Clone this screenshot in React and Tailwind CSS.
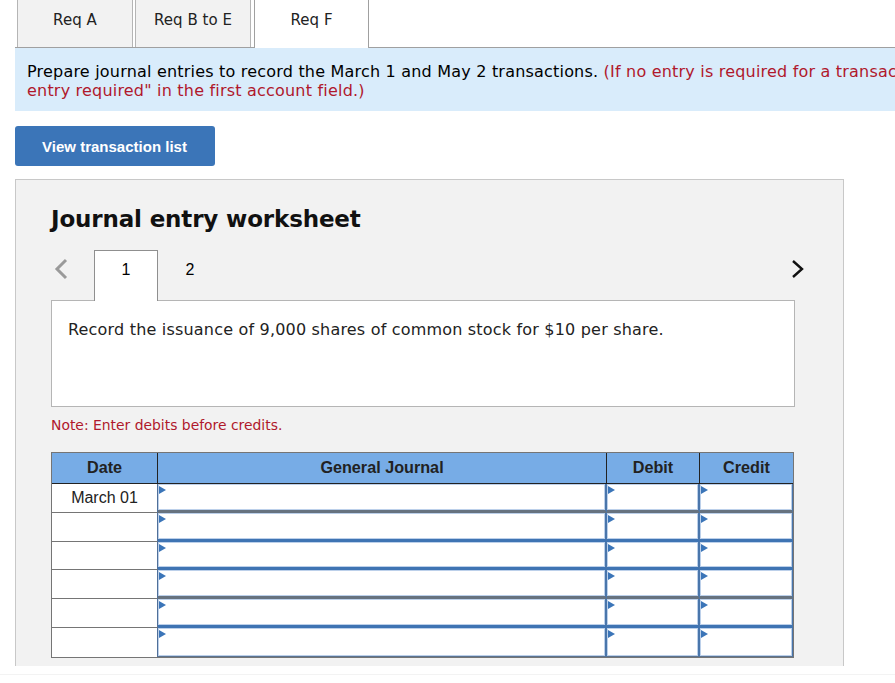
import React from "react";

const rows = [
  { date: "March 01", line: "border-b-[#66727f]" },
  { date: "", line: "border-b-[#3f74b3]" },
  { date: "", line: "border-b-[#3f74b3]" },
  { date: "", line: "border-b-[#66727f]" },
  { date: "", line: "border-b-[#3f74b3]" },
  { date: "", line: "border-b-[#5b7391]" },
];

function InputCell({ line, last, bottom }) {
  return (
    <div className={`relative h-full border-[#4a76ab] ${bottom ? "border-b" : "border-b-[3px]"} ${last ? "border-r" : "border-r-2"} ${line}`}>
      <div className="h-full bg-white border border-[#bcd0ea]" />
      <span className="absolute left-[1px] top-[2px] w-0 h-0 border-y-4 border-y-transparent border-l-[7px] border-l-[#3b75b8]" />
    </div>
  );
}

export default function App() {
  return (
    <div className="relative w-[895px] h-[683px] overflow-hidden bg-white font-['DejaVu_Sans',sans-serif] text-black">
      {/* Tabs */}
      <div className="flex h-[48px] ml-[15px] pl-[2px] border-b border-[#a0a0a0] text-[15px] tracking-[0.05px] text-[#222]">
        <div className="w-[116px] h-[47px] flex items-center justify-center bg-[#f2f2f2] border-x border-[#b5b5b5] pb-[6px]">Req A</div>
        <div className="w-[116px] h-[47px] ml-[2px] flex items-center justify-center bg-[#f2f2f2] border-x border-[#b5b5b5] pb-[6px]">Req B to E</div>
        <div className="w-[115px] h-[48px] ml-[3px] flex items-center justify-center bg-white border-x border-[#a0a0a0] pb-[7px]">Req F</div>
      </div>

      {/* Instructions */}
      <div className="ml-[15px] h-[63px] bg-[#d9ecfb] pl-[12px] pt-[14px] leading-[19px] whitespace-nowrap text-[16px] tracking-[0.2px]">
        <div>
          Prepare journal entries to record the March 1 and May 2 transactions.{" "}
          <span className="text-[#b0182c]">(If no entry is required for a transaction/event, select "No</span>
        </div>
        <div className="text-[#b0182c]">entry required" in the first account field.)</div>
      </div>

      <button className="ml-[15px] mt-[15px] block w-[200px] h-[40px] pt-[2px] pr-[1px] rounded-[3px] bg-[#3b75b8] font-['Liberation_Sans',sans-serif] text-[15px] font-bold text-white">
        View transaction list
      </button>

      {/* Worksheet panel */}
      <div className="ml-[15px] mt-[13px] w-[829px] h-[487px] bg-[#f2f2f2] border border-b-0 border-[#c8c8c8] px-[35px]">
        <h2 className="mt-[24px] text-[23px] tracking-[-0.15px] leading-[30px] font-bold text-[#111]">Journal entry worksheet</h2>

        <div className="relative mt-[16px] h-[50px] flex items-start">
          <svg className="absolute left-[2px] top-[8px]" width="16" height="22" viewBox="0 0 16 22" fill="none">
            <path d="M13 2 L4 11 L13 20" stroke="#9a9a9a" strokeWidth="3" />
          </svg>
          <div className="relative z-10 ml-[43px] w-[64px] h-[51px] bg-white border border-b-0 border-[#8f8f8f] flex items-center justify-center pb-[12px] font-['Liberation_Sans',sans-serif] text-[16px]">1</div>
          <div className="w-[64px] h-[39px] flex items-center justify-center font-['Liberation_Sans',sans-serif] text-[16px]">2</div>
          <svg className="absolute left-[740px] top-[9px]" width="14" height="20" viewBox="0 0 14 20" fill="none">
            <path d="M2 2 L11 10 L2 18" stroke="#111" strokeWidth="2.4" />
          </svg>
        </div>

        <div className="w-[744px] h-[107px] bg-white border border-[#b5b5b5] pl-[16px] pt-[19px] text-[16px] tracking-[0.19px] leading-[20px] text-[#222]">
          Record the issuance of 9,000 shares of common stock for $10 per share.
        </div>

        <p className="mt-[9px] text-[13.9px] leading-[18px] text-[#b0182c]">Note: Enter debits before credits.</p>

        {/* Journal table */}
        <div className="mt-[18px] w-[743px] border border-[#757575] font-['Liberation_Sans',sans-serif] text-[16.2px]">
          <div className="grid grid-cols-[106px_449px_93px_93px] h-[31px] bg-[#77ace6] border-b border-[#222] font-bold text-[#222]">
            <div className="flex items-center justify-center pb-[2px] border-r border-[#222]">Date</div>
            <div className="flex items-center justify-center pb-[2px] border-r border-[#222]">General Journal</div>
            <div className="flex items-center justify-center pb-[2px] border-r border-[#222]">Debit</div>
            <div className="flex items-center justify-center pb-[2px]">Credit</div>
          </div>
          {rows.map((row, i) => (
            <div key={i} className="grid grid-cols-[106px_449px_93px_93px] h-[28.8px] bg-white">
              <div className={`flex items-center justify-center border-r border-r-[#4f6f99] border-b-[#757575] text-[16px] text-[#222] ${i < 5 ? "border-b" : ""}`}>{row.date}</div>
              <InputCell line={row.line} bottom={i === 5} />
              <InputCell line={row.line} bottom={i === 5} />
              <InputCell line={row.line} bottom={i === 5} last />
            </div>
          ))}
        </div>
      </div>

      <div className="mt-[8px] h-[1px] bg-[#f3f3f3]" />
    </div>
  );
}
